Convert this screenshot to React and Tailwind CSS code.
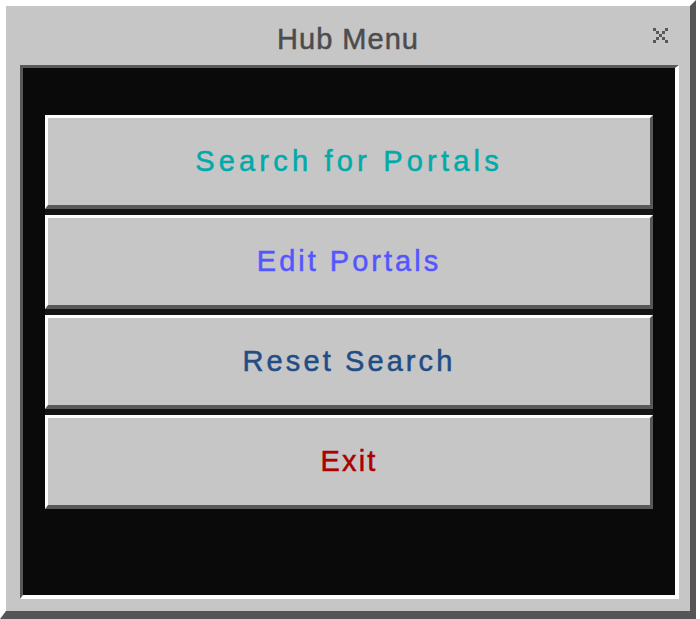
import React from "react";

function CloseX() {
  const cells = [
    [0, 0], [4, 0], [1, 1], [3, 1], [2, 2], [1, 3], [3, 3], [0, 4], [4, 4],
  ];
  return (
    <svg width="15" height="15" viewBox="0 0 15 15" className="block">
      {cells.map(([x, y]) => (
        <rect key={`${x}-${y}`} x={x * 3} y={y * 3} width="3" height="3" fill="#585858" />
      ))}
    </svg>
  );
}

function McButton({ label, color, tracking }) {
  return (
    <div className="h-[94px] bg-[#c6c6c6] border-t-[3px] border-l-[3px] border-r-[3px] border-b-[4px] border-t-white border-l-white border-r-[#585858] border-b-[#585858] flex items-center justify-center">
      <span className={`text-[29px] leading-none [-webkit-text-stroke:0.5px_currentColor] ${color} ${tracking}`}>{label}</span>
    </div>
  );
}

export default function App() {
  return (
    <div
      className="w-[700px] h-[619px] bg-white"
      style={{ fontFamily: '"Liberation Sans", Arial, sans-serif' }}
    >
      <div className="w-[696px] h-[619px] bg-[#c6c6c6] border-t-[6px] border-l-[6px] border-r-[6px] border-b-[8px] border-t-white border-l-white border-r-[#555555] border-b-[#555555] flex flex-col">
        <div className="relative h-[59px] flex items-center justify-center pt-[8px]">
          <span className="text-[29px] leading-none text-[#4c4c4c] tracking-[1px] [-webkit-text-stroke:0.5px_currentColor]">Hub Menu</span>
          <div className="absolute right-[22px] top-[22px]">
            <CloseX />
          </div>
        </div>
        <div className="flex-1 ml-[14px] mr-[11px] mb-[12px] bg-[#0a0a0a] border-t-[3px] border-l-[3px] border-b-[4px] border-r-[4px] border-t-[#585858] border-l-[#585858] border-b-white border-r-white pt-[47px] px-[22px]">
          <div className="flex flex-col gap-[6px] bg-[#141414]">
            <McButton label="Search for Portals" color="text-[#00aaaa]" tracking="tracking-[4.2px]" />
            <McButton label="Edit Portals" color="text-[#5555ff]" tracking="tracking-[3px]" />
            <McButton label="Reset Search" color="text-[#214c86]" tracking="tracking-[3.1px]" />
            <McButton label="Exit" color="text-[#aa0000]" tracking="tracking-[2.2px]" />
          </div>
        </div>
      </div>
    </div>
  );
}
